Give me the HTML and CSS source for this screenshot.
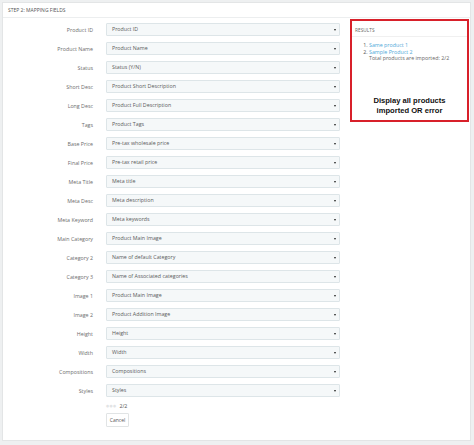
FILE: index.html
```html
<!DOCTYPE html>
<html>
<head>
<meta charset="utf-8">
<link rel="stylesheet" href="styles.css">
</head>
<body>
<div class="panel">
  <div class="panel-heading">Step 2: Mapping fields</div>
  <div class="panel-body">
    <div class="form">
      <div class="row"><label>Product ID</label><div class="sel">Product ID<i></i></div></div>
      <div class="row"><label>Product Name</label><div class="sel">Product Name<i></i></div></div>
      <div class="row"><label>Status</label><div class="sel">Status (Y/N)<i></i></div></div>
      <div class="row"><label>Short Desc</label><div class="sel">Product Short Description<i></i></div></div>
      <div class="row"><label>Long Desc</label><div class="sel">Product Full Description<i></i></div></div>
      <div class="row"><label>Tags</label><div class="sel">Product Tags<i></i></div></div>
      <div class="row"><label>Base Price</label><div class="sel">Pre-tax wholesale price<i></i></div></div>
      <div class="row"><label>Final Price</label><div class="sel">Pre-tax retail price<i></i></div></div>
      <div class="row"><label>Meta Title</label><div class="sel">Meta title<i></i></div></div>
      <div class="row"><label>Meta Desc</label><div class="sel">Meta description<i></i></div></div>
      <div class="row"><label>Meta Keyword</label><div class="sel">Meta keywords<i></i></div></div>
      <div class="row"><label>Main Category</label><div class="sel">Product Main Image<i></i></div></div>
      <div class="row"><label>Category 2</label><div class="sel">Name of default Category<i></i></div></div>
      <div class="row"><label>Category 3</label><div class="sel">Name of Associated categories<i></i></div></div>
      <div class="row"><label>Image 1</label><div class="sel">Product Main Image<i></i></div></div>
      <div class="row"><label>Image 2</label><div class="sel">Product Addition Image<i></i></div></div>
      <div class="row"><label>Height</label><div class="sel">Height<i></i></div></div>
      <div class="row"><label>Width</label><div class="sel">Width<i></i></div></div>
      <div class="row"><label>Compositions</label><div class="sel">Compositions<i></i></div></div>
      <div class="row"><label>Styles</label><div class="sel">Styles<i></i></div></div>
      <div class="progress-row"><span class="spin">&#9679;&#9679;&#9679;</span><span>2/2</span></div>
      <div class="btn-row"><button class="btn">Cancel</button></div>
    </div>
    <div class="results">
      <div class="results-heading">Results</div>
      <ol class="results-list">
        <li><a>Same product 1</a></li>
        <li><a>Sample Product 2</a></li>
      </ol>
      <div class="total">Total products are imported: 2/2</div>
      <div class="note">Display all products<br>imported OR error</div>
    </div>
  </div>
</div>
</body>
</html>
```
FILE: styles.css
```css
html, body {
  margin: 0;
  padding: 0;
}
body {
  background: #eef0f1;
  padding: 2px 3px 0 2px;
  font-family: "Open Sans", "DejaVu Sans", sans-serif;
  font-size: 5.3px;
  color: #555;
}
.panel {
  background: #fff;
  border: 1px solid #e3e5e6;
  box-sizing: border-box;
  height: 439px;
}
.panel-heading {
  height: 14px;
  line-height: 14px;
  padding-left: 5px;
  text-transform: uppercase;
  border-bottom: 1px solid #eceeef;
  color: #555;
  font-size: 5px;
}
.panel-body {
  display: flex;
  align-items: flex-start;
}
.form {
  padding-top: 5px;
  display: flex;
  flex-direction: column;
  gap: 6px;
  width: 337px;
}
.row {
  display: flex;
  align-items: center;
  height: 13px;
}
.row label {
  width: 90px;
  text-align: right;
  color: #6c6c6c;
  margin-right: 13px;
}
.sel {
  position: relative;
  width: 234px;
  height: 13px;
  box-sizing: border-box;
  border: 1px solid #dde5e8;
  background: #f5f8f9;
  border-radius: 1px;
  padding-left: 5px;
  line-height: 11px;
  color: #5a5a5a;
}
.sel i {
  position: absolute;
  right: 3px;
  top: 5px;
  width: 0;
  height: 0;
  border-left: 1.5px solid transparent;
  border-right: 1.5px solid transparent;
  border-top: 2.5px solid #222;
}
.progress-row {
  margin-left: 103px;
  height: 8px;
  line-height: 8px;
  margin-top: -1px;
  display: flex;
  align-items: center;
  gap: 3px;
  color: #555;
}
.spin {
  color: #e2e4e5;
  font-size: 3.5px;
  letter-spacing: 0.4px;
}
.btn-row {
  margin-left: 103px;
  margin-top: -3px;
}
.btn {
  font-family: "Open Sans", "DejaVu Sans", sans-serif;
  font-size: 5px;
  color: #555;
  background: #fff;
  border: 1px solid #e1e4e5;
  border-radius: 1px;
  width: 23px;
  height: 14px;
  padding: 0;
}
.results {
  margin-left: 10px;
  margin-top: 1px;
  width: 119px;
  height: 103px;
  box-sizing: border-box;
  border: 2px solid #d8202a;
  display: flex;
  flex-direction: column;
}
.results-heading {
  text-transform: uppercase;
  font-size: 4.8px;
  color: #666;
  padding-left: 3px;
  height: 15px;
  line-height: 18px;
  border-bottom: 1px solid #f0f0f0;
}
.results-list {
  margin: 5px 0 0 0;
  padding-left: 17px;
  line-height: 6.7px;
}
.results-list a {
  color: #4fa8d8;
}
.total {
  padding-left: 17px;
  line-height: 7px;
  color: #666;
}
.note {
  margin-top: 34px;
  text-align: center;
  font-family: "Liberation Sans", Arial, sans-serif;
  font-weight: bold;
  font-size: 7.6px;
  line-height: 10px;
  color: #111;
}
```
